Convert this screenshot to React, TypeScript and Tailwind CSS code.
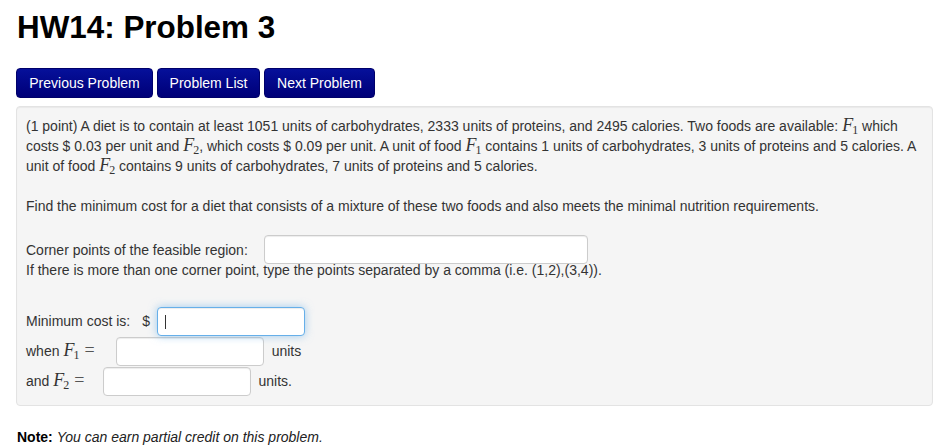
import React from 'react'

function F({ n }: { n: string }) {
  return (
    <span className="inline-block whitespace-nowrap font-['Liberation_Serif',serif] text-[18px] italic leading-[14px]">
      F
      <span className="relative top-[3px] ml-[-1px] not-italic text-[12px] leading-none">{n}</span>
    </span>
  )
}

function Eq() {
  return <span className="font-['Liberation_Serif',serif] text-[18px] leading-none text-[#555]">=</span>
}

function Field({ w, focused }: { w: string; focused?: boolean }) {
  return (
    <div
      className={
        'h-[29px] rounded-[4px] border bg-white ' +
        w +
        (focused
          ? ' relative border-[#66afe9] shadow-[inset_0_1px_1px_rgba(0,0,0,0.075),0_0_8px_rgba(102,175,233,0.6)]'
          : ' border-[#cccccc] shadow-[inset_0_1px_1px_rgba(0,0,0,0.075)]')
      }
    >
      {focused && <span className="absolute left-[7px] top-[7px] h-[14px] w-px bg-[#333]" />}
    </div>
  )
}

export default function App() {
  const btn =
    'h-[30px] rounded-[4px] border border-[#00006a] bg-gradient-to-b from-[#06109a] to-[#000078] text-[14px] text-white'

  return (
    <div className="min-h-[447px] bg-white px-4 font-['Liberation_Sans',Arial,sans-serif] text-[14px] text-[#333]">
      <h1 className="pt-[11px] pl-px text-[31.4px] font-bold leading-[34px] text-black">HW14: Problem 3</h1>

      <div className="mt-[23px] flex gap-[4px]">
        <button type="button" className={btn + ' w-[137px]'}>
          Previous Problem
        </button>
        <button type="button" className={btn + ' w-[103px]'}>
          Problem List
        </button>
        <button type="button" className={btn + ' w-[111px]'}>
          Next Problem
        </button>
      </div>

      <div className="mt-[8px] w-[917px] rounded-[4px] border border-[#e3e3e3] bg-[#f5f5f5] px-[9px] pt-[9px] pb-[9px] leading-[20px] shadow-[inset_0_1px_1px_rgba(0,0,0,0.05)]">
        <p>
          (1 point) A diet is to contain at least 1051 units of carbohydrates, 2333 units of proteins, and 2495 calories.
          Two foods are available: <F n="1" /> which costs $ 0.03 per unit and <F n="2" />, which costs $ 0.09 per unit. A
          unit of food <F n="1" /> contains 1 units of carbohydrates, 3 units of proteins and 5 calories. A unit of food{' '}
          <F n="2" /> contains 9 units of carbohydrates, 7 units of proteins and 5 calories.
        </p>
        <p className="mt-[20px]">
          Find the minimum cost for a diet that consists of a mixture of these two foods and also meets the minimal
          nutrition requirements.
        </p>

        <div className="mt-[19px] flex h-[29px] items-center gap-[16px]">
          <span>Corner points of the feasible region:</span>
          <Field w="w-[324px]" />
        </div>
        <p className="-mt-[4px]">
          If there is more than one corner point, type the points separated by a comma (i.e. (1,2),(3,4)).
        </p>

        <div className="mt-[26px] flex h-[30px] items-center">
          <span>Minimum cost is:</span>
          <span className="ml-[12px]">$</span>
          <span className="ml-[7px]">
            <Field w="w-[148px]" focused />
          </span>
        </div>
        <div className="flex h-[30px] items-center">
          <span>when</span>
          <span className="ml-[4px]">
            <F n="1" />
          </span>
          <span className="ml-[5px]">
            <Eq />
          </span>
          <span className="ml-[21px]">
            <Field w="w-[148px]" />
          </span>
          <span className="ml-[8px]">units</span>
        </div>
        <div className="flex h-[30px] items-center">
          <span>and</span>
          <span className="ml-[4px]">
            <F n="2" />
          </span>
          <span className="ml-[5px]">
            <Eq />
          </span>
          <span className="ml-[18px]">
            <Field w="w-[148px]" />
          </span>
          <span className="ml-[8px]">units.</span>
        </div>
      </div>

      <p className="mt-[21px] pl-px leading-[20px] text-[#222]">
        <b className="text-black">Note:</b> <i>You can earn partial credit on this problem.</i>
      </p>
    </div>
  )
}
